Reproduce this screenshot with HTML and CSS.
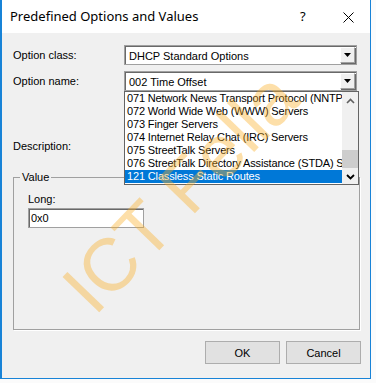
FILE: index.html
```html
<!DOCTYPE html>
<html>
<head>
    <title>Predefined Options and Values</title>
    <link rel="stylesheet" href="styles.css">
</head>
<body>
    <div class="window">
        <div class="titlebar">
            <span class="title">Predefined Options and Values</span>
            <span class="help">?</span>
            <span class="close">
                <svg width="11" height="11" viewBox="0 0 11 11"><path d="M0.5 0.5 L10.5 10.5 M10.5 0.5 L0.5 10.5" stroke="#000" stroke-width="1" fill="none"/></svg>
            </span>
        </div>

        <div class="content">
            <div class="row">
                <label>Option class:</label>
                <div class="combo">
                    <span class="combo-text">DHCP Standard Options</span>
                    <span class="arrow"><svg width="7" height="4" viewBox="0 0 7 4"><polygon points="0,0 7,0 3.5,4" fill="#000"/></svg></span>
                </div>
            </div>

            <div class="row row-name">
                <label>Option name:</label>
                <div class="combo">
                    <span class="combo-text">002 Time Offset</span>
                    <span class="arrow"><svg width="7" height="4" viewBox="0 0 7 4"><polygon points="0,0 7,0 3.5,4" fill="#000"/></svg></span>

                    <!-- lista desplegada -->
                    <div class="droplist">
                        <ul class="items">
                            <li>071 Network News Transport Protocol (NNTP)</li>
                            <li>072 World Wide Web (WWW) Servers</li>
                            <li>073 Finger Servers</li>
                            <li>074 Internet Relay Chat (IRC) Servers</li>
                            <li>075 StreetTalk Servers</li>
                            <li>076 StreetTalk Directory Assistance (STDA) Servers</li>
                            <li class="selected">121 Classless Static Routes</li>
                        </ul>
                        <div class="scrollbar">
                            <span class="sb-btn"><svg width="9" height="6" viewBox="0 0 9 6"><polyline points="1,5 4.5,1.5 8,5" stroke="#606060" stroke-width="1.6" fill="none"/></svg></span>
                            <span class="sb-track"><span class="sb-thumb"></span></span>
                            <span class="sb-btn sb-down"><svg width="9" height="6" viewBox="0 0 9 6"><polyline points="1,1 4.5,4.5 8,1" stroke="#000" stroke-width="1.8" fill="none"/></svg></span>
                        </div>
                    </div>
                </div>
            </div>

            <div class="row-desc">
                <label>Description:</label>
            </div>

            <fieldset class="value-group">
                <legend>Value</legend>
                <div class="value-body">
                    <label>Long:</label>
                    <input type="text" class="long" value="0x0">
                </div>
            </fieldset>

            <div class="buttons">
                <button type="button" class="btn">OK</button>
                <button type="button" class="btn">Cancel</button>
            </div>
        </div>

        <div class="watermark">ICT Fella</div>
    </div>
</body>
</html>
```

FILE: styles.css
```css
body {margin: 0; background: #fbfbfb; font-family: "Liberation Sans", Arial, sans-serif; font-size: 11px; color: #000; overflow: hidden;}
.window {position: relative; width: 368px; height: 378px; border-left: 2px solid #1883d7; border-right: 1px solid #1883d7; border-bottom: 1px solid #1883d7; background: #f0f0f0; overflow: hidden;}

.titlebar {display: flex; align-items: center; height: 33px; background: #fff; font-family: "Noto Sans", "Open Sans", sans-serif;}
.title {flex: 1; padding-left: 8px; font-size: 13px; padding-bottom: 1px;}
.help {width: 43px; font-size: 13px; padding-bottom: 1px;}
.close {width: 27px; display: flex; padding-top: 1px;}

.content {display: flex; flex-direction: column; padding: 12px 8px 0 11px;}
.row {display: flex; align-items: center; height: 20px;}
.row-name {margin-top: 6px;}
.row label {width: 111px;}

.combo {position: relative; display: flex; align-items: center; width: 231px; height: 18px; background: #fff; border: 1px solid #a0a0a0; box-shadow: inset 1px 1px #696969;}
.combo-text {flex: 1; padding-left: 4px; padding-top: 1px;}
.arrow {display: flex; align-items: center; justify-content: center; width: 13px; height: 14px; margin-right: 1px; background: #f0f0f0; border: 1px solid; border-color: #fff #a0a0a0 #a0a0a0 #fff; box-shadow: 1px 1px #696969;}

.droplist {position: absolute; top: 19px; left: -1px; width: 233px; height: 92px; display: flex; background: #fff; border: 1px solid #646464; z-index: 2;}
.items {flex: 1; list-style: none; margin: 0; padding: 0; overflow: hidden;}
.items li {height: 13px; line-height: 13px; padding-left: 2px; white-space: nowrap; overflow: hidden; letter-spacing: -0.15px;}
.items li.selected {background: #0078d7; color: #fff;}
.scrollbar {display: flex; flex-direction: column; width: 16px; background: #f0f0f0;}
.sb-btn {display: flex; align-items: center; justify-content: center; height: 17px;}
.sb-down {height: 15px;}
.sb-track {flex: 1;}
.sb-thumb {display: block; margin-top: 41px; height: 18px; background: #cdcdcd;}

.row-desc {margin-top: 49px; height: 13px; line-height: 13px;}

.value-group {margin: 18px 0 0 0; width: 345px; padding: 0; border: 1px solid #a0a0a0; box-shadow: 1px 1px #fff;}
.value-group legend {margin-left: 6px; padding: 0 2px; line-height: 13px;}
.value-body {display: flex; flex-direction: column; align-items: flex-start; height: 136px; padding: 9px 0 0 14px;}
.value-body label {line-height: 13px; margin-bottom: 2px;}
.long {width: 110px; height: 16px; margin: 0; padding: 1px 2px; font: inherit; border: 1px solid #a0a0a0; box-shadow: inset 1px 1px #696969; background: #fff;}

.buttons {display: flex; justify-content: flex-end; gap: 6px; margin-top: 11px; padding-right: 1px;}
.btn {width: 75px; height: 23px; font: inherit; background: #e1e1e1; border: 1px solid #adadad; padding: 0;}

.watermark {position: absolute; left: 178px; top: 192px; transform: translate(-50%, -50%) rotate(-46deg); font-family: "Liberation Sans", sans-serif; font-size: 74px; white-space: nowrap; color: rgba(250, 175, 40, 0.4); pointer-events: none; z-index: 5;}
```
